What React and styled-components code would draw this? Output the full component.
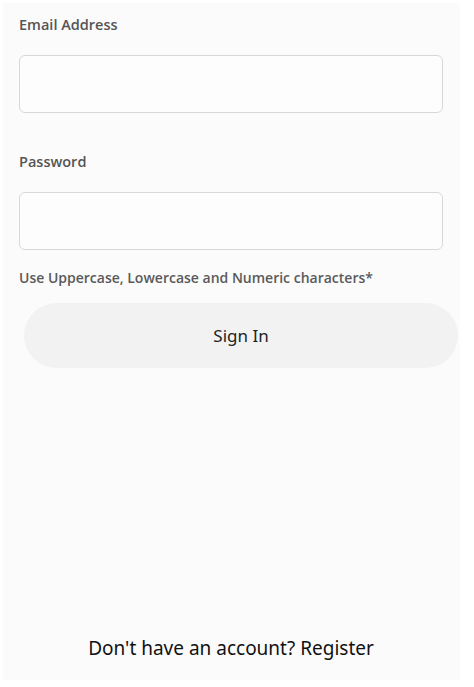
import styled, { createGlobalStyle } from 'styled-components';

const GlobalStyle = createGlobalStyle`
  html, body {
    margin: 0;
    padding: 0;
    background: #ffffff;
  }
  * {
    box-sizing: border-box;
  }
`;

const Page = styled.div`
  min-height: 687px;
  padding: 3px 14px 7px 3px;
  display: flex;
`;

const Panel = styled.form`
  flex: 1;
  display: flex;
  flex-direction: column;
  background: #fbfbfb;
  padding: 12px 17px 18px 16px;
`;

const Label = styled.label`
  font-family: "Open Sans", "Noto Sans", sans-serif;
  font-size: 14.5px;
  font-weight: 600;
  line-height: 20px;
  color: #555555;
  margin-top: ${p => p.$gap || 0}px;
  margin-bottom: 20px;
`;

const Input = styled.input`
  width: 100%;
  height: 58px;
  border: 1px solid #d8d8d8;
  border-radius: 6px;
  background: #fdfdfd;
  padding: 0 14px;
  font-size: 16px;
  outline: none;
`;

const Hint = styled.p`
  margin: 19px 0 16px;
  font-family: "Open Sans", "Noto Sans", sans-serif;
  font-size: 14px;
  font-weight: 600;
  line-height: 18px;
  color: #5a5a5a;
`;

const SubmitButton = styled.button`
  height: 65px;
  margin: 0 -15px 0 5px;
  border: none;
  border-radius: 33px;
  background: #f2f2f2;
  font-family: "Noto Sans", "Open Sans", sans-serif;
  font-size: 17px;
  color: #222222;
  cursor: pointer;
`;

const Footer = styled.p`
  margin: auto 0 0;
  text-align: center;
  font-family: "Noto Sans", "Open Sans", sans-serif;
  font-size: 19px;
  line-height: 28px;
  color: #111111;
`;

const RegisterLink = styled.a`
  color: inherit;
  text-decoration: none;
`;

export default function App() {
  return (
    <>
      <GlobalStyle />
      <Page>
        <Panel onSubmit={e => e.preventDefault()}>
          <Label htmlFor="email">Email Address</Label>
          <Input id="email" type="email" />
          <Label htmlFor="password" $gap={39}>Password</Label>
          <Input id="password" type="password" />
          <Hint>Use Uppercase, Lowercase and Numeric characters*</Hint>
          <SubmitButton type="submit">Sign In</SubmitButton>
          <Footer>
            Don't have an account? <RegisterLink href="#">Register</RegisterLink>
          </Footer>
        </Panel>
      </Page>
    </>
  );
}
